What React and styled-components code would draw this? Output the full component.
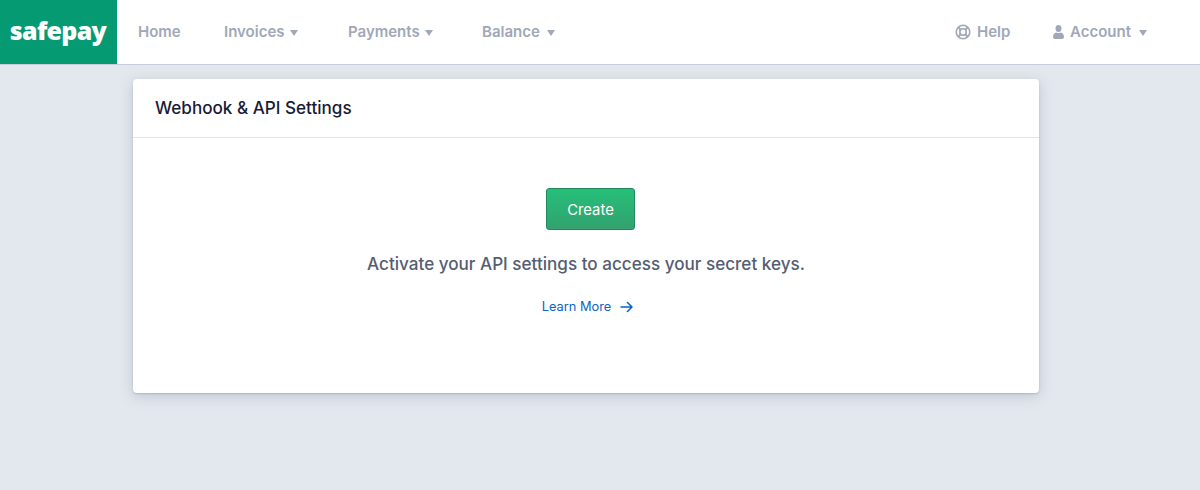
import React from "react";
import styled, { createGlobalStyle } from "styled-components";

const Global = createGlobalStyle`
  html, body { margin: 0; padding: 0; background: #e3e8ee; }
  body { font-family: Inter, "Liberation Sans", sans-serif; -webkit-font-smoothing: antialiased; }
`;

const Page = styled.div`
  width: 1200px;
  height: 490px;
  overflow: hidden;
  background: #e3e8ee;
`;

const Header = styled.header`
  display: flex;
  align-items: stretch;
  height: 64px;
  background: #fff;
  border-bottom: 1px solid #c6ccd9;
`;

const Logo = styled.div`
  width: 117px;
  display: flex;
  align-items: center;
  justify-content: center;
  background: #069a72;
  color: #fff;
  font-family: "Noto Sans", sans-serif;
  font-weight: 900;
  font-size: 25px;
  letter-spacing: -0.7px;
  padding: 0 1px 4px 0;
  box-sizing: border-box;
`;

const Nav = styled.nav`
  flex: 1;
  display: flex;
  align-items: center;
  padding: 0 0 1px 21px;
`;

const NavItem = styled.div`
  display: flex;
  align-items: center;
  width: ${(p) => p.$w}px;
  flex: none;
  gap: ${(p) => p.$gap};
  font-size: 15px;
  font-weight: 600;
  color: #a0a8b8;
`;

const Caret = styled.span`
  display: inline-block;
  width: 0;
  height: 0;
  margin-top: 2px;
  border-left: 4.5px solid transparent;
  border-right: 4.5px solid transparent;
  border-top: 6px solid #a0a8b8;
  margin-left: ${(p) => p.$ml}px;
`;

const Main = styled.main`
  display: flex;
  justify-content: flex-start;
  padding: 14px 0 0 133px;
`;

const Card = styled.section`
  width: 906px;
  height: 314px;
  background: #fff;
  border-radius: 4px;
  box-shadow: 0 1px 2px rgba(90, 100, 125, 0.25), 0 3px 14px rgba(90, 100, 125, 0.25);
  display: flex;
  flex-direction: column;
`;

const CardHead = styled.div`
  height: 59px;
  box-sizing: border-box;
  border-bottom: 1px solid #e1e5ec;
  padding: 0 0 2px 22px;
  display: flex;
  align-items: center;
  font-size: 17.1px;
  font-weight: 500;
  color: #171b36;
`;

const CardBody = styled.div`
  display: flex;
  flex-direction: column;
  align-items: center;
  padding: 50px 0 0 0;
`;

const CreateButton = styled.button`
  width: 89px;
  height: 42px;
  margin-left: 9px;
  border-radius: 3px;
  border: 1px solid #1f8a5e;
  background: linear-gradient(#25bf79, #33a26f);
  color: #fff;
  font: 400 14.8px Inter, sans-serif;
  padding: 1px 0 0;
`;

const Desc = styled.p`
  margin: 22px 0 0;
  font-size: 17.1px;
  line-height: 24px;
  font-weight: 500;
  color: #545d72;
`;

const LearnMore = styled.a`
  display: flex;
  align-items: center;
  gap: 9px;
  margin: 22px 0 0 3px;
  font-size: 12.8px;
  line-height: 18px;
  font-weight: 400;
  color: #0b63c4;
`;

const Help = () => (
  <svg width="16" height="16" viewBox="0 0 16 16" fill="none" stroke="#a0a8b8" strokeWidth="1.6">
    <circle cx="8" cy="8" r="6.8" />
    <circle cx="8" cy="8" r="3.2" />
    <path d="M3.3 3.3l2.4 2.4M12.7 3.3l-2.4 2.4M3.3 12.7l2.4-2.4M12.7 12.7l-2.4-2.4" strokeWidth="2" />
  </svg>
);

const User = () => (
  <svg width="11" height="14" viewBox="0 0 11 14" fill="#a0a8b8">
    <ellipse cx="5.5" cy="3.6" rx="3" ry="3.5" />
    <path d="M0 12c0-3 1.6-4.4 3.2-4.6 1.4.7 3.2.7 4.6 0C9.400 7.600 11 9 11 12c0 1.200-.8 2-2 2H2c-1.200 0-2-.8-2-2z" />
  </svg>
);

const Arrow = () => (
  <svg width="13" height="12" viewBox="0 0 13 12" fill="none" stroke="#0b63c4" strokeWidth="1.5" strokeLinecap="round" strokeLinejoin="round">
    <path d="M1 6h11M7.500 1.500L12 6l-4.500 4.500" />
  </svg>
);

export default function App() {
  return (
    <Page>
      <Global />
      <Header>
        <Logo>safepay</Logo>
        <Nav>
          <NavItem $w={86} $gap="4px">Home</NavItem>
          <NavItem $w={124} $gap="4px">Invoices <Caret $ml={1} /></NavItem>
          <NavItem $w={134} $gap="4px">Payments <Caret $ml={1} /></NavItem>
          <NavItem $w={473} $gap="4px">Balance <Caret $ml={3} /></NavItem>
          <NavItem $w={98} $gap="6px"><Help /> Help</NavItem>
          <NavItem $w={100} $gap="6px"><User /> Account <Caret $ml={2} /></NavItem>
        </Nav>
      </Header>
      <Main>
        <Card>
          <CardHead>Webhook &amp; API Settings</CardHead>
          <CardBody>
            <CreateButton>Create</CreateButton>
            <Desc>Activate your API settings to access your secret keys.</Desc>
            <LearnMore>Learn More <Arrow /></LearnMore>
          </CardBody>
        </Card>
      </Main>
    </Page>
  );
}
